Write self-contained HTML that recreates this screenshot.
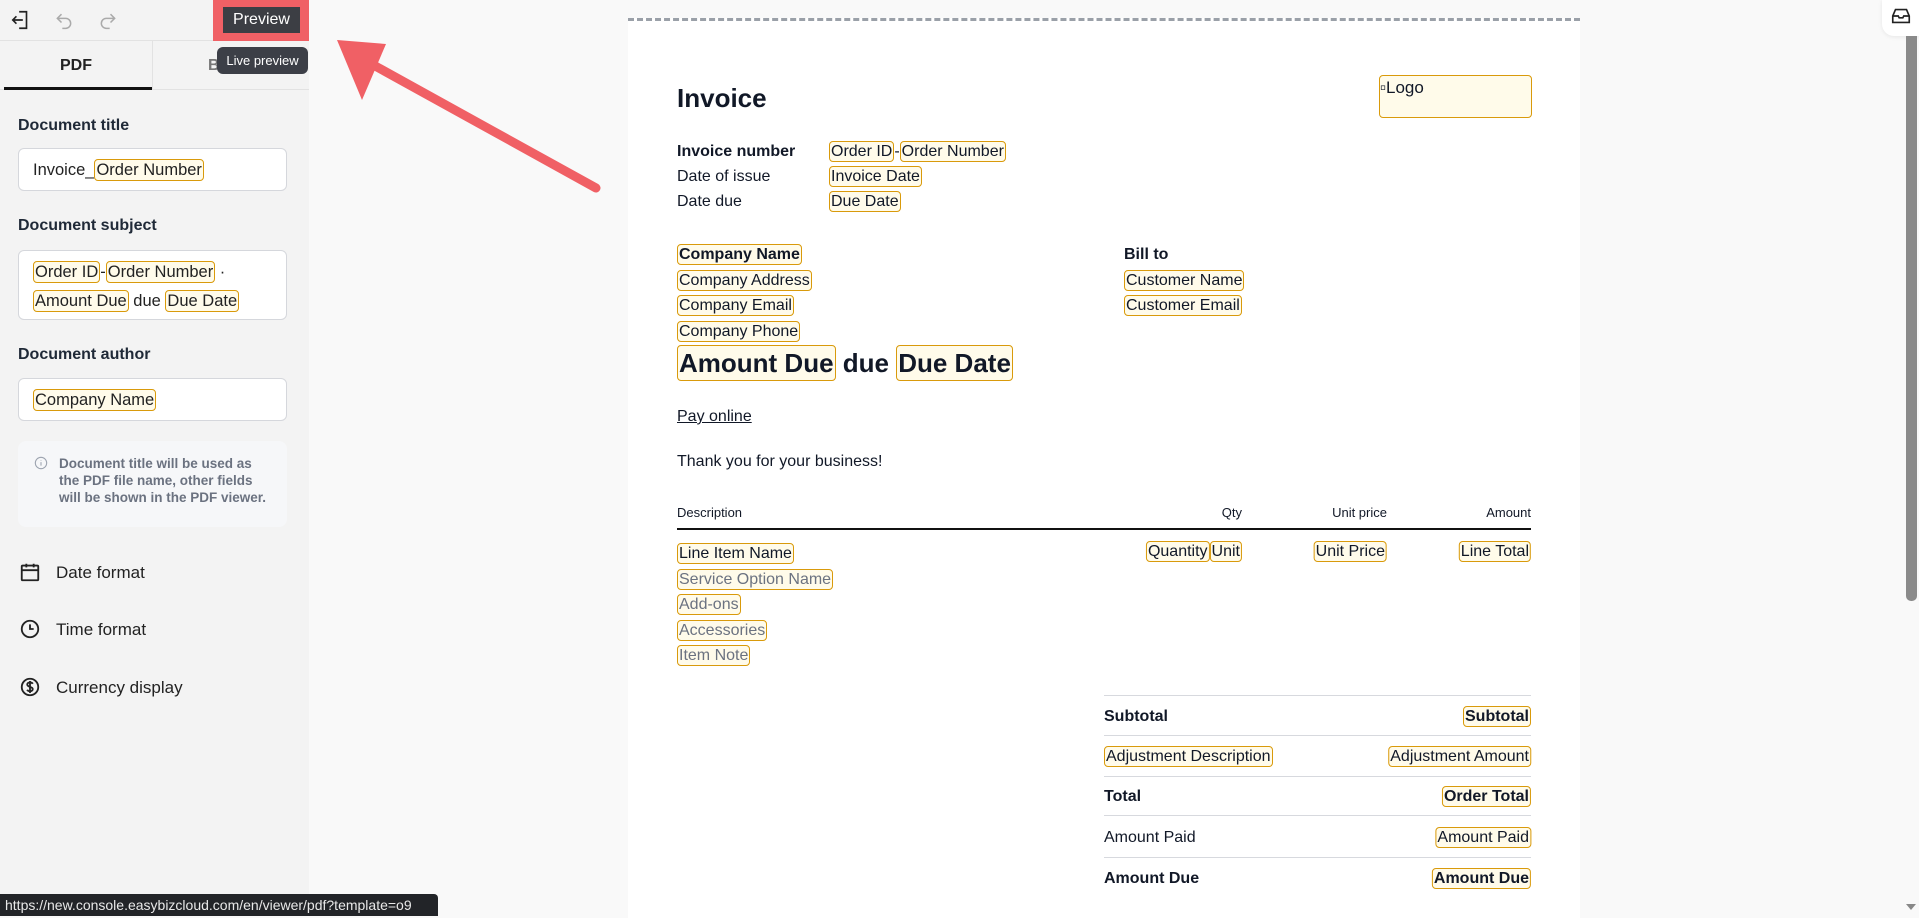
<!DOCTYPE html>
<html><head><meta charset="utf-8"><style>
*{box-sizing:border-box;margin:0;padding:0}
body{width:1919px;height:916px;overflow:hidden;background:#f9f9f9;font-family:"Liberation Sans",sans-serif;color:#111827;position:relative}
.a{position:absolute;white-space:nowrap}
.c{background:#fffbea;border:1px solid #d99a0b;border-radius:4px;padding:1px 1px}
#side{position:absolute;left:0;top:0;width:309px;height:916px;background:#f3f3f3}
.lbl{font-weight:bold;font-size:16px;color:#1f2937}
.inp{position:absolute;left:18px;width:269px;background:#fff;border:1px solid #d5d7dc;border-radius:6px;font-size:16.5px;color:#222}
.paper{position:absolute;left:628px;top:18px;width:952px;height:900px;background:#fff;border-top:3px dashed #9aa0a8}
.p{font-size:16px;line-height:22px}
.b{font-weight:bold}
.g{color:#6b7280}
.hr{position:absolute;left:1104px;width:427px;height:1px;background:#d7d9de}
</style></head><body>
<div id="side">
 <svg class="a" style="left:10px;top:9px" width="22" height="22" viewBox="0 0 24 24" fill="none" stroke="#222" stroke-width="1.8"><path d="M10 3h8v18h-8"/><path d="M14 12H3M7 8l-4 4 4 4"/></svg>
 <svg class="a" style="left:54px;top:10px" width="20" height="20" viewBox="0 0 24 24" fill="none" stroke="#aaa" stroke-width="1.8"><path d="M9 5L4 10l5 5"/><path d="M4 10h10a6 6 0 010 12h-4"/></svg>
 <svg class="a" style="left:98px;top:10px" width="20" height="20" viewBox="0 0 24 24" fill="none" stroke="#aaa" stroke-width="1.8"><path d="M15 5l5 5-5 5"/><path d="M20 10H10a6 6 0 000 12h4"/></svg>
 <div class="a" style="left:0;top:40px;width:309px;height:1px;background:#e2e2e2"></div>
 <div class="a" style="left:152px;top:41px;width:1px;height:49px;background:#e2e2e2"></div>
 <div class="a" style="left:0;top:89px;width:309px;height:1px;background:#e2e2e2"></div>
 <div class="a" style="left:60px;top:57px;font-size:16px;font-weight:bold;color:#222">PDF</div>
 <div class="a" style="left:208px;top:57px;font-size:16px;font-weight:bold;color:#777">Block</div>
 <div class="a" style="left:4px;top:87px;width:148px;height:3px;background:#111"></div>
 <div class="a lbl" style="left:18px;top:117px">Document title</div>
 <div class="inp" style="top:148px;height:43px;padding:12px 14px">Invoice_<span class="c">Order Number</span></div>
 <div class="a lbl" style="left:18px;top:217px">Document subject</div>
 <div class="inp" style="top:250px;height:70px;padding:7px 14px;line-height:29px"><span class="c">Order ID</span>-<span class="c">Order Number</span> ·<br><span class="c">Amount Due</span> due <span class="c">Due Date</span></div>
 <div class="a lbl" style="left:18px;top:346px">Document author</div>
 <div class="inp" style="top:378px;height:43px;padding:12px 14px"><span class="c">Company Name</span></div>
 <div class="a" style="left:18px;top:441px;width:269px;height:86px;background:#f6f7f9;border-radius:8px"></div>
 <svg class="a" style="left:34px;top:456px" width="14" height="14" viewBox="0 0 16 16" fill="none" stroke="#9ca3af" stroke-width="1.2"><circle cx="8" cy="8" r="6.5"/><path d="M8 7v4M8 5v.5"/></svg>
 <div class="a" style="left:59px;top:455px;font-size:13.5px;font-weight:bold;color:#6b7280;line-height:17px">Document title will be used as<br>the PDF file name, other fields<br>will be shown in the PDF viewer.</div>
 <svg class="a" style="left:19px;top:561px" width="22" height="22" viewBox="0 0 24 24" fill="none" stroke="#222" stroke-width="2"><rect x="3" y="5" width="18" height="16" rx="1"/><path d="M3 10h18M8 3v4M16 3v4"/></svg>
 <div class="a" style="left:56px;top:563px;font-size:17px;color:#222">Date format</div>
 <svg class="a" style="left:19px;top:618px" width="22" height="22" viewBox="0 0 24 24" fill="none" stroke="#222" stroke-width="2"><circle cx="12" cy="12" r="9"/><path d="M12 7v5h4"/></svg>
 <div class="a" style="left:56px;top:620px;font-size:17px;color:#222">Time format</div>
 <svg class="a" style="left:19px;top:676px" width="22" height="22" viewBox="0 0 24 24" fill="none" stroke="#222" stroke-width="2"><circle cx="12" cy="12" r="9"/><path d="M15 8.5c-.5-1-1.6-1.5-3-1.5-1.8 0-3 .9-3 2.3 0 3.2 6 1.8 6 5 0 1.4-1.3 2.3-3 2.3-1.5 0-2.6-.6-3.1-1.6M12 5.5v13"/></svg>
 <div class="a" style="left:56px;top:678px;font-size:17px;color:#222">Currency display</div>
</div>
<div class="a" style="left:0;top:894px;width:438px;height:22px;background:#222428;border-top-right-radius:4px;color:#e8e8e8;font-size:14px;padding:3px 5px">https://new.console.easybizcloud.com/en/viewer/pdf?template=o9</div>

<div class="a" style="left:213px;top:0;width:96px;height:41px;background:#f06065"></div>
<div class="a" style="left:223px;top:7px;width:77px;height:26px;background:#3c3e44;color:#fff;font-size:16px;text-align:center;line-height:26px">Preview</div>
<div class="a" style="left:217px;top:47px;width:91px;height:27px;background:#3c3f47;border-radius:6px;color:#fff;font-size:13px;text-align:center;line-height:27px">Live preview</div>
<svg class="a" style="left:0;top:0" width="700" height="220"><line x1="596" y1="188" x2="368" y2="62" stroke="#f06065" stroke-width="9" stroke-linecap="round"/><polygon points="337,40 386,44 362,100" fill="#f06065"/></svg>

<div class="paper">
 <div class="a b" style="left:49px;top:62px;font-size:26px">Invoice</div>
 <div class="a c" style="left:751px;top:54px;width:153px;height:43px;font-size:17px;padding:2px 0">▫Logo</div>
 <div class="a p" style="left:49px;top:118px;line-height:25px"><span class="b">Invoice number</span><br>Date of issue<br>Date due</div>
 <div class="a p" style="left:201px;top:118px;line-height:25px"><span class="c">Order ID</span>-<span class="c">Order Number</span><br><span class="c">Invoice Date</span><br><span class="c">Due Date</span></div>
 <div class="a p" style="left:49px;top:221px;line-height:25.5px"><span class="c b">Company Name</span><br><span class="c">Company Address</span><br><span class="c">Company Email</span><br><span class="c">Company Phone</span></div>
 <div class="a p" style="left:496px;top:221px;line-height:25.5px"><span class="b">Bill to</span><br><span class="c">Customer Name</span><br><span class="c">Customer Email</span></div>
 <div class="a b" style="left:49px;top:325px;font-size:26px;line-height:34px"><span class="c" style="padding:2px 1px">Amount Due</span> due <span class="c" style="padding:2px 1px">Due Date</span></div>
 <div class="a p" style="left:49px;top:385px;text-decoration:underline">Pay online</div>
 <div class="a p" style="left:49px;top:430px">Thank you for your business!</div>
 <div class="a" style="left:49px;top:484px;font-size:13px">Description</div>
 <div class="a" style="left:590px;top:484px;width:24px;text-align:right;font-size:13px">Qty</div>
 <div class="a" style="left:700px;top:484px;width:59px;text-align:right;font-size:13px">Unit price</div>
 <div class="a" style="left:820px;top:484px;width:83px;text-align:right;font-size:13px">Amount</div>
 <div class="a" style="left:49px;top:507px;width:854px;height:2px;background:#111"></div>
 <div class="a p" style="left:49px;top:520px;line-height:25.5px"><span class="c">Line Item Name</span><br><span class="c g">Service Option Name</span><br><span class="c g">Add-ons</span><br><span class="c g">Accessories</span><br><span class="c g">Item Note</span></div>
 <div class="a p" style="left:614px;top:520px;transform:translateX(-100%)"><span class="c">Quantity</span><span class="c">Unit</span></div>
 <div class="a p" style="left:759px;top:520px;transform:translateX(-100%)"><span class="c">Unit Price</span></div>
 <div class="a p" style="left:903px;top:520px;transform:translateX(-100%)"><span class="c">Line Total</span></div>
</div>
<div class="hr" style="top:695px"></div><div class="hr" style="top:735px"></div><div class="hr" style="top:776px"></div><div class="hr" style="top:815px"></div><div class="hr" style="top:857px"></div>
<div class="a p b" style="left:1104px;top:706px">Subtotal</div><div class="a p b" style="left:1531px;top:706px;transform:translateX(-100%)"><span class="c">Subtotal</span></div>
<div class="a p" style="left:1104px;top:746px"><span class="c">Adjustment Description</span></div><div class="a p" style="left:1531px;top:746px;transform:translateX(-100%)"><span class="c">Adjustment Amount</span></div>
<div class="a p b" style="left:1104px;top:786px">Total</div><div class="a p b" style="left:1531px;top:786px;transform:translateX(-100%)"><span class="c">Order Total</span></div>
<div class="a p" style="left:1104px;top:827px">Amount Paid</div><div class="a p" style="left:1531px;top:827px;transform:translateX(-100%)"><span class="c">Amount Paid</span></div>
<div class="a p b" style="left:1104px;top:868px">Amount Due</div><div class="a p b" style="left:1531px;top:868px;transform:translateX(-100%)"><span class="c">Amount Due</span></div>

<div class="a" style="left:1882px;top:0;width:37px;height:36px;background:#fff;border-bottom-left-radius:12px;box-shadow:0 1px 4px rgba(0,0,0,.08)"></div>
<svg class="a" style="left:1890px;top:6px" width="22" height="20" viewBox="0 0 24 20" fill="none" stroke="#222" stroke-width="1.8"><path d="M3 10l3-7h12l3 7v7H3z"/><path d="M3 10h6l1 2h4l1-2h6"/></svg>
<div class="a" style="left:1906px;top:36px;width:11px;height:565px;background:#8a8a8a;border-radius:0 0 5px 5px"></div>
<div class="a" style="left:1906px;top:904px;width:0;height:0;border-left:5px solid transparent;border-right:5px solid transparent;border-top:6px solid #888"></div>
</body></html>
